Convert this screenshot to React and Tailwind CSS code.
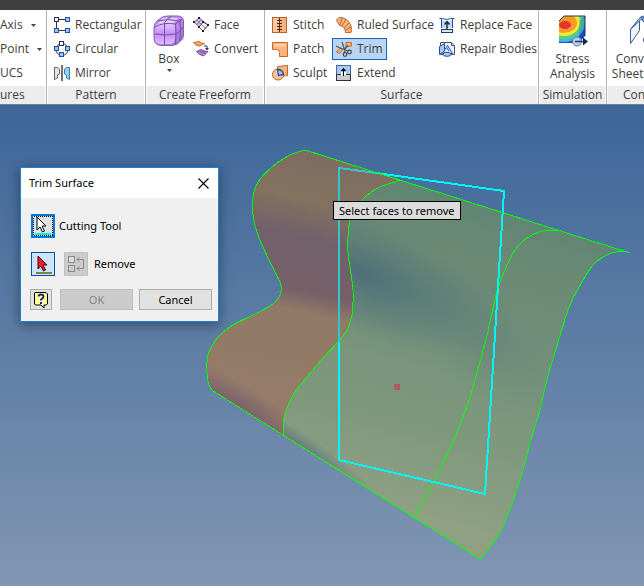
import React from "react";

const ICON = "shrink-0 w-4 h-4";

const RectangularIcon = () => (
  <svg viewBox="0 0 16 16" className={ICON} shapeRendering="crispEdges">
    <path d="M5 2.5h6M2.5 5v6M5 13.5h6" stroke="#333" fill="none" />
    <rect x="0.5" y="0.5" width="4" height="4" fill="#fff" stroke="#1c2f5c" />
    <rect x="11.5" y="0.5" width="4" height="4" fill="#9fc3ee" stroke="#2450a4" />
    <rect x="0.5" y="11.5" width="4" height="4" fill="#9fc3ee" stroke="#2450a4" />
    <rect x="11.5" y="11.5" width="4" height="4" fill="#9fc3ee" stroke="#2450a4" />
  </svg>
);

const CircularIcon = () => (
  <svg viewBox="0 0 16 16" className={ICON}>
    <circle cx="8" cy="8.5" r="6" stroke="#333" fill="none" />
    <rect x="5.5" y="0.5" width="4" height="4" fill="#fff" stroke="#1c2f5c" />
    <rect x="0.5" y="5.5" width="4" height="4" fill="#9fc3ee" stroke="#2450a4" />
    <rect x="11.5" y="5.5" width="4" height="4" fill="#9fc3ee" stroke="#2450a4" />
    <rect x="5.5" y="11.5" width="4" height="4" fill="#9fc3ee" stroke="#2450a4" />
  </svg>
);

const MirrorIcon = () => (
  <svg viewBox="0 0 16 16" className={ICON}>
    <path d="M.5 2.5q4-.5 5 1.500v5l-2 1v3L.5 14.500z" fill="#e3e5e8" stroke="#60656d" />
    <path d="M15.500 2.500q-4-.5-5 1.500v5l2 1v3l3 1.500z" fill="#9ad0f2" stroke="#2f7fb5" />
    <path d="M8 0v16" stroke="#111" strokeWidth="1.200" />
  </svg>
);

const BoxIcon = () => (
  <svg viewBox="0 0 32 32" className="w-8 h-8">
    <defs>
      <linearGradient id="boxFill" x1="0" y1="0" x2="1" y2="1">
        <stop offset="0" stopColor="#c9a4f2" />
        <stop offset=".45" stopColor="#c48df5" />
        <stop offset="1" stopColor="#9a6ccf" />
      </linearGradient>
      <linearGradient id="boxFront" x1="0" y1="0" x2="0" y2="1">
        <stop offset="0" stopColor="#e6ccff" />
        <stop offset=".5" stopColor="#c88cff" />
        <stop offset="1" stopColor="#ddb8ff" />
      </linearGradient>
    </defs>
    <path d="M8 3Q10 1 15 1h10q5 0 5.500 5v14q0 4-3 6-3 4-8 4.500H8Q1 30 1 23V13q0-5 3-7z" fill="url(#boxFill)" stroke="#8562ad" />
    <path d="M3 11q2-3 7-3h8q4 0 4 4v11q0 5-4 6H8q-6 0-6-6z" fill="url(#boxFront)" />
    <path d="M5 8 10 3h15l-4 5z" fill="#ecdcff" opacity=".8" />
    <path d="M1.500 19Q12 21 23 19q5-3 7-7M11.500 30V8q2-4 7-7M2 12q8-5 20-3 4-1 7-5M22.500 29q1-10 0-20M27 26q1-12 0-22M5 6q10-3 21 0" fill="none" stroke="#70519a" />
  </svg>
);

const FaceIcon = () => (
  <svg viewBox="0 0 16 16" className={ICON}>
    <path d="M1 5 6 1l9 7-5 6z" fill="#d9c3f2" stroke="#7a5a9a" />
    <path d="m6 10 4-5 5 3-5 6z" fill="#f4f4f6" stroke="#555" />
    <path d="M3.500 3 12 11M8 2.500 3.500 8" stroke="#7a5a9a" strokeWidth=".8" />
    <path d="M0 4h2v2H0zM5 0h2v2H5zM9 4h2v2H9zM14 7h2v2h-2zM9 13h2v2H9zM5 9h2v2H5z" fill="#222" />
  </svg>
);

const ConvertIcon = () => (
  <svg viewBox="0 0 16 16" className={ICON}>
    <path d="M.5 1.500Q4 1 6 .5q3 2 5.500 2L6.500 5Q3 5 .5 1.500z" fill="#f7a766" stroke="#d06a26" />
    <path d="M3.500 10.500 8 8.500q3 2 7 2L10.500 15Q6 14 3.500 10.500z" fill="#b184d4" stroke="#7a4aa3" />
    <path d="m6 9.500 7 3M12 9.500l-5 4" stroke="#7a4aa3" strokeWidth=".7" />
    <path d="M11 5h3v3" fill="none" stroke="#333" />
    <path d="M12 7h4l-2 2.500z" fill="#333" />
  </svg>
);

const StitchIcon = () => (
  <svg viewBox="0 0 16 16" className={ICON}>
    <rect x=".5" y=".5" width="14" height="15" fill="#fbb27c" stroke="#b8622c" />
    <path d="M1 1h5v14H1z" fill="#fdc79d" />
    <path d="M7.500 1v14" stroke="#5a3218" />
    <path d="M5 3.500h5M5 6.500h5M5 9.500h5M5 12.500h5" stroke="#3a2a22" />
  </svg>
);

const PatchIcon = () => (
  <svg viewBox="0 0 16 16" className={ICON}>
    <path d="M.5 1.500h15v14H7.500v-4q0-3-3-3h-4z" fill="#fbb27c" stroke="#c06a2e" />
    <path d="M2 3h12v3H2z" fill="#fdcaa2" />
  </svg>
);

const SculptIcon = () => (
  <svg viewBox="0 0 16 16" className={ICON}>
    <path d="M5.500 1.500 15.500.5v10l-6 1-4-2z" fill="#fbb27c" stroke="#c06a2e" />
    <circle cx="6" cy="9.500" r="5.500" fill="#fcc296" stroke="#b8622c" />
    <path d="M5.500 4.500q5 0 6 5l-5 1z" fill="#a9c9f3" stroke="#1f4fa8" strokeWidth="1.300" />
  </svg>
);

const RuledIcon = () => (
  <svg viewBox="0 0 16 16" className={ICON}>
    <path d="M.5 3 3 .5q6-.5 9.500 4 3 3 3 8l-.5 3H9.500Q9 9 3.500 8.500z" fill="#fbb27c" stroke="#c06a2e" />
    <path d="m4 8 2-7M6 9l4-7M8 11l5-5M9.500 13l6-3" stroke="#c06a2e" />
  </svg>
);

const TrimIcon = () => (
  <svg viewBox="0 0 16 16" className={ICON}>
    <path d="M10 1.500h5.500v3.500L10 6z" fill="#fbb27c" stroke="#c06a2e" />
    <path d="m.5 11 3.500-4 2.500 1.500-3 4z" fill="#fbb27c" stroke="#c06a2e" />
    <path d="M6 1 8.500 8.500l.5 3M0 5l8 3.500 4 1.500M8.500 8.500 12 4" fill="none" stroke="#555d66" strokeWidth="1.300" />
    <circle cx="9" cy="13.500" r="1.800" fill="none" stroke="#444" strokeWidth="1.200" />
    <circle cx="13.500" cy="11" r="1.800" fill="none" stroke="#444" strokeWidth="1.200" />
  </svg>
);

const ExtendIcon = () => (
  <svg viewBox="0 0 16 16" className={ICON} shapeRendering="crispEdges">
    <rect x=".5" y=".5" width="14" height="9" fill="#a9c9f3" stroke="#4468a8" />
    <rect x=".5" y="9.500" width="14" height="6" fill="#c9ccd1" stroke="#333" />
    <path d="M5 7h5v3H5z" fill="#fff" />
    <path d="M7 3h1v8H7zM6 4h3v1H6zM5 5h5v1H5z" fill="#000" />
  </svg>
);

const ReplaceIcon = () => (
  <svg viewBox="0 0 16 16" className={ICON}>
    <path d="M3 3q5 2 10 0v8H3z" fill="#c3d9f5" />
    <path d="M.5 1.500h3q4 2 8 0h4M2.500 2v9M13.500 2v9" fill="none" stroke="#2450a4" />
    <rect x="2.500" y="12.500" width="11" height="3" fill="#dfe3ea" stroke="#223a6b" />
    <path d="M8 12V5M5.500 7.500 8 4.500l2.500 3" fill="none" stroke="#1b2330" strokeWidth="1.400" />
  </svg>
);

const RepairIcon = () => (
  <svg viewBox="0 0 16 16" className={ICON}>
    <path d="M1.500 1.500h11l3 3v9h-14z" fill="#eef3fb" stroke="#44546f" />
    <path d="M12.500 1.500v3h3" fill="#c9d7ec" stroke="#44546f" />
    <path d="m.5 5.500 5-3v8l-5 3z" fill="#a9c9f3" stroke="#2450a4" />
    <path d="M3.500 12.500 8.500 4.500l5 8z" fill="#dfeafa" stroke="#2450a4" />
    <ellipse cx="8" cy="13.300" rx="4" ry="2" fill="#a9c9f3" stroke="#2450a4" />
    <path d="m8 7 2 3" stroke="#2450a4" />
  </svg>
);

const StressIcon = () => (
  <svg viewBox="0 0 32 32" className="w-8 h-8">
    <defs>
      <clipPath id="stressClip">
        <path d="M2 6 7 1h21v20l-6 7H2z" />
      </clipPath>
    </defs>
    <g clipPath="url(#stressClip)">
      <path d="M0 0h32v32H0z" fill="#1d4fc4" />
      <ellipse cx="7" cy="7" rx="21" ry="20" fill="#45b8ea" />
      <ellipse cx="7" cy="7" rx="19" ry="17" fill="#58d36a" />
      <ellipse cx="7" cy="7" rx="16" ry="14" fill="#f4ea3c" />
      <ellipse cx="7" cy="8" rx="13" ry="10" fill="#f8992a" />
      <ellipse cx="8" cy="10" rx="6" ry="4" fill="#e5342b" />
      <path d="m22 28 6-7V1l-6 5z" fill="#123a9c" opacity=".2" />
    </g>
    <path d="M2 6 7 1h21v20" fill="none" stroke="#26384f" />
    <circle cx="20" cy="26.500" r="4.500" fill="#b9cdec" stroke="#5f7ea8" />
    <path d="M18 26.500h9" stroke="#1b3d6e" strokeWidth="1.500" />
    <path d="m26 22.500 5 4-5 4z" fill="#10294f" />
  </svg>
);

const SheetIcon = () => (
  <svg viewBox="0 0 32 32" className="w-8 h-8">
    <path d="m1.500 14.500 9-11v12l-9 13z" fill="#f2f6fc" stroke="#3a5c94" />
    <path d="M1.500 14.500 11 2.500q2-2 5-1h16v14H22L12.500 4z" fill="#b9d0f0" stroke="#3a5c94" />
    <path d="M12 3 22 15.500h10V6L20 2z" fill="#87a9dc" stroke="#3a5c94" />
    <circle cx="19" cy="25" r="4.500" fill="#d5c5ea" stroke="#6d4a96" />
  </svg>
);

const Caret = () => (
  <svg viewBox="0 0 5 3" className="shrink-0 w-[5px] h-[3px]">
    <path d="M0 0h5L2.500 3z" fill="#444" />
  </svg>
);

const Tool = ({ icon, label, active }) => (
  <button
    className={
      active
        ? "flex items-center gap-[5px] h-[22px] px-[3px] w-fit whitespace-nowrap border border-[#1464c0] bg-[#b9d5f3]"
        : "flex items-center gap-[5px] h-[22px] px-[3px] w-fit whitespace-nowrap border border-transparent"
    }
  >
    {icon}
    <span>{label}</span>
  </button>
);

const Column = ({ children }) => <div className="flex flex-col gap-0.5">{children}</div>;

const Panel = ({ title, width, children }) => (
  <section className={`flex flex-col shrink-0 border-r border-[#b2b2b2] bg-white ${width}`}>
    <div className="flex h-[76px] px-[3px] pt-1">{children}</div>
    <h2 className="mx-px h-[18px] bg-[#ececec] text-center leading-[18px] whitespace-nowrap">{title}</h2>
  </section>
);

const Ribbon = () => (
  <header className="border-t-[10px] border-[#404040] bg-white overflow-hidden text-[12px] leading-4 text-[#3c3c3c] font-['Open_Sans',sans-serif]">
    <div className="flex h-[94px]">
      <section className="flex flex-col shrink-0 w-[47px] border-r border-[#b2b2b2]">
        <div className="flex flex-col gap-0.5 h-[76px] pt-1">
          <button className="flex items-center gap-2 h-[22px]">Axis <Caret /></button>
          <button className="flex items-center gap-2 h-[22px]">Point <Caret /></button>
          <button className="flex items-center h-[22px]">UCS</button>
        </div>
        <h2 className="mr-px h-[18px] bg-[#ececec] leading-[18px]">ures</h2>
      </section>

      <Panel title="Pattern" width="w-[99px]">
        <Column>
          <Tool icon={<RectangularIcon />} label="Rectangular" />
          <Tool icon={<CircularIcon />} label="Circular" />
          <Tool icon={<MirrorIcon />} label="Mirror" />
        </Column>
      </Panel>

      <Panel title="Create Freeform" width="w-[119px]">
        <button className="flex flex-col items-center shrink-0 w-10 h-fit pt-px">
          <BoxIcon />
          <span className="mt-1">Box</span>
          <span className="pt-0.5"><Caret /></span>
        </button>
        <Column>
          <Tool icon={<FaceIcon />} label="Face" />
          <Tool icon={<ConvertIcon />} label="Convert" />
        </Column>
      </Panel>

      <Panel title="Surface" width="w-[274px]">
        <div className="grid grid-cols-[64px_103px_auto]">
          <Column>
            <Tool icon={<StitchIcon />} label="Stitch" />
            <Tool icon={<PatchIcon />} label="Patch" />
            <Tool icon={<SculptIcon />} label="Sculpt" />
          </Column>
          <Column>
            <Tool icon={<RuledIcon />} label="Ruled Surface" />
            <Tool icon={<TrimIcon />} label="Trim" active />
            <Tool icon={<ExtendIcon />} label="Extend" />
          </Column>
          <Column>
            <Tool icon={<ReplaceIcon />} label="Replace Face" />
            <Tool icon={<RepairIcon />} label="Repair Bodies" />
          </Column>
        </div>
      </Panel>

      <Panel title="Simulation" width="w-[68px]">
        <button className="flex flex-col items-center w-full h-fit pt-px">
          <StressIcon />
          <span className="mt-1 leading-[15px]">Stress<br />Analysis</span>
        </button>
      </Panel>

      <Panel title="Convert" width="w-[77px]">
        <button className="flex flex-col items-center w-full h-fit pt-px whitespace-nowrap">
          <SheetIcon />
          <span className="mt-1 leading-[15px]">Convert to<br />Sheet Metal</span>
        </button>
      </Panel>
    </div>
  </header>
);

// smooth curve through a list of points (Catmull-Rom to bezier)
const curve = (pts) =>
  pts
    .slice(0, -1)
    .map((p, i) => {
      const prev = pts[i - 1] || p;
      const next = pts[i + 1];
      const after = pts[i + 2] || next;
      const c1 = [p[0] + (next[0] - prev[0]) / 6, p[1] + (next[1] - prev[1]) / 6];
      const c2 = [next[0] - (after[0] - p[0]) / 6, next[1] - (after[1] - p[1]) / 6];
      return `C${c1} ${c2} ${next}`;
    })
    .join(" ");

const leftEdge = [[305, 150], [290, 155], [272, 167], [258, 182], [253, 197], [253, 215], [258, 235], [270, 262], [280, 282], [281, 292], [277, 300], [270, 306], [253, 315], [233, 325], [218, 337], [209, 352], [207, 362], [207, 373], [209, 385], [213, 391]];
const trimEdge = [[400, 180], [380, 187], [367, 195], [358, 205], [350, 220], [348, 237], [348, 253], [351, 273], [353, 290], [353, 303], [352, 315], [347, 330], [338, 342], [323, 358], [307, 377], [295, 392], [287, 408], [284, 418], [283, 436]];
const innerEdge = [[558, 230], [543, 231], [532, 235], [522, 242], [513, 253], [505, 270], [498, 288], [492, 313], [486, 339], [475, 380], [468, 403], [458, 430], [450, 448], [438, 473], [427, 495], [414, 518]];
const rightEdge = [[630, 253], [622, 251], [612, 253], [603, 257], [593, 265], [582, 282], [570, 305], [559, 339], [547, 380], [540, 410], [533, 433], [523, 470], [515, 495], [505, 522], [497, 537], [492, 545], [480, 559]];

const leftFace = `M305 150 ${curve(leftEdge)} L283 436 ${curve([...trimEdge].reverse())} Z`;
const rightFace = `M400 180 ${curve(trimEdge)} L480 559 ${curve([...rightEdge].reverse())} Z`;

const Model = () => (
  <svg viewBox="0 105 644 481" className="block w-[644px] h-[481px]">
    <defs>
      <linearGradient id="brown" gradientUnits="userSpaceOnUse" x1="305" y1="150" x2="245" y2="423">
        <stop offset="0" stopColor="#7d6c62" />
        <stop offset=".17" stopColor="#84725f" />
        <stop offset=".31" stopColor="#71606b" />
        <stop offset=".49" stopColor="#775f67" />
        <stop offset=".57" stopColor="#917a67" />
        <stop offset="1" stopColor="#977b69" />
      </linearGradient>
      <linearGradient id="green" gradientUnits="userSpaceOnUse" x1="430" y1="190" x2="350" y2="500">
        <stop offset="0" stopColor="#618574" />
        <stop offset=".2" stopColor="#6c8b76" />
        <stop offset=".4" stopColor="#708e7a" />
        <stop offset=".55" stopColor="#79957b" />
        <stop offset=".75" stopColor="#80997e" />
        <stop offset="1" stopColor="#8fa083" />
      </linearGradient>
      <radialGradient id="shade">
        <stop offset="0" stopColor="#4b6c79" stopOpacity=".9" />
        <stop offset=".45" stopColor="#527379" stopOpacity=".55" />
        <stop offset="1" stopColor="#5d7d78" stopOpacity="0" />
      </radialGradient>
      <radialGradient id="edgeShade">
        <stop offset="0" stopColor="#5c6f80" stopOpacity=".9" />
        <stop offset="1" stopColor="#5c6f80" stopOpacity="0" />
      </radialGradient>
      <radialGradient id="purple">
        <stop offset="0" stopColor="#765d6c" />
        <stop offset=".4" stopColor="#785f6c" stopOpacity=".7" />
        <stop offset="1" stopColor="#785f6c" stopOpacity="0" />
      </radialGradient>
      <clipPath id="rightClip"><path d={rightFace} /></clipPath>
      <clipPath id="leftClip"><path d={leftFace} /></clipPath>
    </defs>
    <path d={leftFace} fill="url(#brown)" />
    <path d={rightFace} fill="url(#green)" />
    <g clipPath="url(#leftClip)">
      <ellipse cx="236" cy="412" rx="110" ry="28" fill="url(#purple)" transform="rotate(32 236 412)" />
    </g>
    <g clipPath="url(#rightClip)">
      <ellipse cx="358" cy="272" rx="170" ry="60" fill="url(#shade)" transform="rotate(22 358 272)" />
      <ellipse cx="490" cy="350" rx="100" ry="50" fill="url(#shade)" opacity=".2" transform="rotate(45 490 350)" />
      <ellipse cx="290" cy="443" rx="100" ry="16" fill="url(#edgeShade)" transform="rotate(32 290 443)" />
    </g>
    <g fill="none" stroke="#00ff00" shapeRendering="crispEdges">
      <path d={`M305 150 ${curve(leftEdge)} L480 559`} />
      <path d={`M630 253 ${curve(rightEdge)}`} />
      <path d={`M400 180 ${curve(trimEdge)}`} />
      <path d={`M558 230 ${curve(innerEdge)}`} />
    </g>
    <g fill="none" strokeWidth="2" shapeRendering="crispEdges">
      <path d="M339 342V168L376 173" stroke="#2fc9cb" />
      <path d="M376 173 504 191 485 494 339 460V342" stroke="#00f5f5" />
    </g>
    <path d="M305 150 630 253" stroke="#00ff00" shapeRendering="crispEdges" />
    <rect x="394" y="384" width="6" height="6" fill="#b05c5c" />
  </svg>
);

const Arrow = ({ fill, stroke }) => (
  <path d="M4 1v13l3-3 2.500 5 2-1-2.500-5h4z" fill={fill} stroke={stroke} />
);

const TrimDialog = () => (
  <div
    role="dialog"
    aria-label="Trim Surface"
    className="absolute left-5 top-[62px] w-[199px] border border-[#1883d7] bg-[#f0f0f0] shadow-[0_3px_12px_rgba(0,0,0,0.4)] text-[11px] leading-4 text-black font-['Noto_Sans',sans-serif]"
  >
    <div className="flex items-center justify-between h-[30px] bg-white px-2 pr-[9px]">
      <h1>Trim Surface</h1>
      <button aria-label="Close">
        <svg viewBox="0 0 11 11" className="w-[11px] h-[11px]">
          <path d="m.5.5 10 10M10.500.5l-10 10" stroke="#000" strokeWidth="1.100" />
        </svg>
      </button>
    </div>
    <div className="pt-4 pb-[11px] px-[10px]">
      <div className="flex items-center gap-1">
        <button aria-label="Select cutting tool" className="w-6 h-6 border-2 border-[#0078d7] bg-[#e1e1e1]">
          <svg viewBox="0 0 20 20" className="w-5 h-5">
            <rect x=".5" y=".5" width="19" height="19" fill="none" stroke="#000" strokeDasharray="1 1" shapeRendering="crispEdges" />
            <path d="M2 17h16v2H2z" fill="#00f0f0" />
            <Arrow fill="#fff" stroke="#000" />
          </svg>
        </button>
        <span>Cutting Tool</span>
      </div>
      <div className="flex items-center mt-[14px]">
        <button aria-label="Select faces" className="w-6 h-6 border border-[#005499] bg-[#cce4f7]">
          <svg viewBox="0 0 22 22" className="w-[22px] h-[22px]">
            <path d="M4 19h16v2H4z" fill="#808040" />
            <g transform="translate(2 2)"><Arrow fill="#f02030" stroke="#400" /></g>
          </svg>
        </button>
        <button aria-label="Invert selection" disabled className="w-6 h-6 ml-[9px] border border-[#bfbfbf] bg-[#cccccc]">
          <svg viewBox="0 0 22 22" className="w-[22px] h-[22px]" fill="none" stroke="#8a8a8a">
            <rect x="3.500" y="3.500" width="6" height="6" fill="#ddd" />
            <rect x="3.500" y="12.500" width="6" height="6" />
            <path d="M12 6.500h6.500v9H12M14.500 4 12 6.500 14.500 9M14.500 13 12 15.500l2.500 2.500" />
          </svg>
        </button>
        <span className="ml-1.5">Remove</span>
      </div>
      <div className="flex items-center mt-[13px] -ml-px -mr-1">
        <button aria-label="Help" className="w-[22px] h-[21px] border border-[#adadad] bg-[#e1e1e1]">
          <svg viewBox="0 0 20 19" className="w-5 h-[19px]">
            <path d="M4 2.500h11l1.500 1.500v10l-1.500 1h-2v3l-3-3H4.500L3.500 14V3z" fill="#ffff9c" stroke="#000" />
            <path d="M7.500 6.500q0-2 2.500-2t2.500 2q0 1.500-2.500 3v1" fill="none" stroke="#1a1a80" strokeWidth="1.800" />
            <path d="M9 12h2v2H9z" fill="#1a1a80" />
          </svg>
        </button>
        <button disabled className="flex-1 h-[21px] ml-2 border border-[#bfbfbf] bg-[#cccccc] text-[#838383]">OK</button>
        <button className="flex-1 h-[21px] ml-1.5 border border-[#adadad] bg-[#e1e1e1]">Cancel</button>
      </div>
    </div>
  </div>
);

const App = () => {
  return (
    <div className="flex flex-col min-h-screen">
      <Ribbon />
      <main className="relative flex-1 overflow-hidden border-t border-[#6c7f93] bg-linear-to-b from-[#3c6699] to-[#8196b1]">
        <Model />
        <div
          role="tooltip"
          className="absolute left-[333px] top-24 h-[19px] px-[5px] border border-black bg-[#dcdcdc] text-[11px] leading-[17px] whitespace-nowrap font-['Noto_Sans',sans-serif]"
        >
          Select faces to remove
        </div>
        <TrimDialog />
      </main>
    </div>
  );
};

export default App;
